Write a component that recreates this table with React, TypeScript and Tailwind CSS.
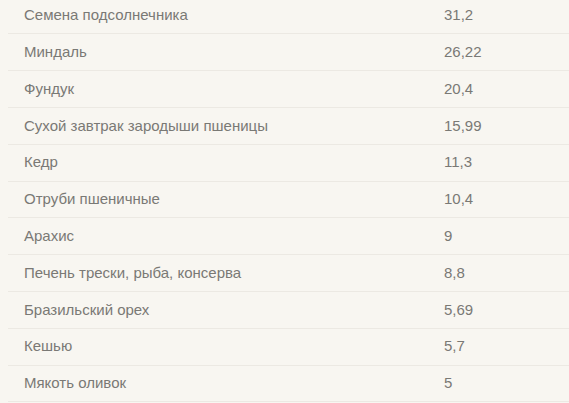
const rows: [string, string][] = [
  ['Семена подсолнечника', '31,2'],
  ['Миндаль', '26,22'],
  ['Фундук', '20,4'],
  ['Сухой завтрак зародыши пшеницы', '15,99'],
  ['Кедр', '11,3'],
  ['Отруби пшеничные', '10,4'],
  ['Арахис', '9'],
  ['Печень трески, рыба, консерва', '8,8'],
  ['Бразильский орех', '5,69'],
  ['Кешью', '5,7'],
  ['Мякоть оливок', '5'],
];

export default function App() {
  return (
    <div className="h-[403px] overflow-hidden bg-[#f8f6f1] font-['Liberation_Sans',Arial,sans-serif] text-[15px] text-[#7a7975]">
      <div className="-mt-[2.4px] ml-2">
        {rows.map(([name, value]) => (
          <div
            key={name}
            className="flex h-[36.8px] items-center border-b border-[#ece9e3]"
          >
            <div className="w-[436px] pl-4">{name}</div>
            <div>{value}</div>
          </div>
        ))}
      </div>
    </div>
  );
}
